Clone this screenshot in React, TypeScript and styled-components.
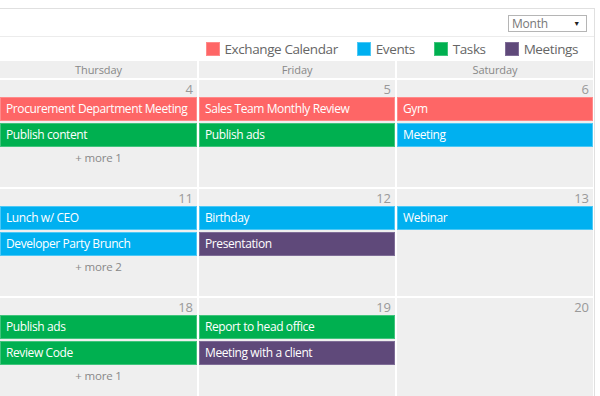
import React from "react";
import styled, { createGlobalStyle } from "styled-components";

const GlobalStyle = createGlobalStyle`
  html, body {
    margin: 0;
    padding: 0;
    background: #fff;
    overflow: hidden;
  }
  body {
    font-family: "Open Sans", "Liberation Sans", sans-serif;
  }
`;

const COLORS: Record<string, { bg: string; border: string }> = {
  exchange: { bg: "#fe6666", border: "#ff8a8a" },
  events: { bg: "#00b0f0", border: "#4cc8f5" },
  tasks: { bg: "#00b050", border: "#40c47c" },
  meetings: { bg: "#5f497a", border: "#7f6d97" },
};

type Kind = keyof typeof COLORS;

type Ev = { title: string; kind: Kind };
type Day = { num: number; events: Ev[]; more?: number };

const weeks: Day[][] = [
  [
    {
      num: 4,
      events: [
        { title: "Procurement Department Meeting", kind: "exchange" },
        { title: "Publish content", kind: "tasks" },
      ],
      more: 1,
    },
    {
      num: 5,
      events: [
        { title: "Sales Team Monthly Review", kind: "exchange" },
        { title: "Publish ads", kind: "tasks" },
      ],
    },
    {
      num: 6,
      events: [
        { title: "Gym", kind: "exchange" },
        { title: "Meeting", kind: "events" },
      ],
    },
  ],
  [
    {
      num: 11,
      events: [
        { title: "Lunch w/ CEO", kind: "events" },
        { title: "Developer Party Brunch", kind: "events" },
      ],
      more: 2,
    },
    {
      num: 12,
      events: [
        { title: "Birthday", kind: "events" },
        { title: "Presentation", kind: "meetings" },
      ],
    },
    {
      num: 13,
      events: [{ title: "Webinar", kind: "events" }],
    },
  ],
  [
    {
      num: 18,
      events: [
        { title: "Publish ads", kind: "tasks" },
        { title: "Review Code", kind: "tasks" },
      ],
      more: 1,
    },
    {
      num: 19,
      events: [
        { title: "Report to head office", kind: "tasks" },
        { title: "Meeting with a client", kind: "meetings" },
      ],
    },
    { num: 20, events: [] },
  ],
];

const legend: { label: string; kind: Kind }[] = [
  { label: "Exchange Calendar", kind: "exchange" },
  { label: "Events", kind: "events" },
  { label: "Tasks", kind: "tasks" },
  { label: "Meetings", kind: "meetings" },
];

const days = ["Thursday", "Friday", "Saturday"];

export default function App() {
  return (
    <Page>
      <GlobalStyle />
      <Panel>
        <Toolbar>
          <ViewSelect>
            <span>Month</span>
            <Arrow>▼</Arrow>
          </ViewSelect>
        </Toolbar>
        <Legend>
          {legend.map((l) => (
            <LegendItem key={l.label}>
              <Swatch $kind={l.kind} />
              {l.label}
            </LegendItem>
          ))}
        </Legend>
        <Grid>
          {days.map((d) => (
            <DayHead key={d}>{d}</DayHead>
          ))}
          {weeks.map((week) =>
            week.map((day) => (
              <Cell key={day.num}>
                <DayNum>{day.num}</DayNum>
                <Events>
                  {day.events.map((e, i) => (
                    <EventBar key={i} $kind={e.kind}>
                      {e.title}
                    </EventBar>
                  ))}
                </Events>
                {day.more ? <More>+ more {day.more}</More> : null}
              </Cell>
            ))
          )}
        </Grid>
      </Panel>
    </Page>
  );
}

const Page = styled.div`
  width: 600px;
  height: 396px;
  overflow: hidden;
  padding-top: 8px;
  box-sizing: border-box;
`;

const Panel = styled.div`
  width: 595px;
  border-top: 1px solid #e0e0e0;
  border-right: 1px solid #e0e0e0;
  box-sizing: border-box;
`;

const Toolbar = styled.div`
  height: 28px;
  display: flex;
  align-items: center;
  justify-content: flex-end;
  padding-right: 7px;
  border-bottom: 1px solid #ececec;
  box-sizing: border-box;
`;

const ViewSelect = styled.div`
  width: 79px;
  height: 17px;
  border: 1px solid #b5b5b5;
  box-sizing: border-box;
  display: flex;
  align-items: center;
  justify-content: space-between;
  padding: 0 6px 0 3px;
  font-size: 12px;
  letter-spacing: -0.2px;
  color: #777;
  margin-top: 2px;
`;

const Arrow = styled.span`
  font-size: 7px;
  color: #222;
`;

const Legend = styled.div`
  height: 24px;
  display: flex;
  align-items: center;
  justify-content: flex-end;
  gap: 19px;
  padding-right: 16px;
`;

const LegendItem = styled.div`
  display: flex;
  align-items: center;
  gap: 5px;
  font-size: 13.5px;
  letter-spacing: -0.4px;
  color: #666;
`;

const Swatch = styled.span<{ $kind: Kind }>`
  width: 14px;
  height: 14px;
  box-sizing: border-box;
  background: ${(p) => COLORS[p.$kind].bg};
  border: 1px solid ${(p) => COLORS[p.$kind].border};
`;

const Grid = styled.div`
  display: grid;
  grid-template-columns: 197px 196px 196px;
  grid-template-rows: 17px repeat(3, 107px);
  gap: 2px;
`;

const DayHead = styled.div`
  background: #efefef;
  color: #888;
  font-size: 11px;
  letter-spacing: -0.1px;
  line-height: 17px;
  text-align: center;
`;

const Cell = styled.div`
  background: #efefef;
  display: flex;
  flex-direction: column;
`;

const DayNum = styled.div`
  height: 17px;
  line-height: 18px;
  text-align: right;
  padding-right: 4px;
  font-size: 13px;
  color: #999;
`;

const Events = styled.div`
  display: flex;
  flex-direction: column;
  gap: 2px;
`;

const EventBar = styled.div<{ $kind: Kind }>`
  height: 24px;
  box-sizing: border-box;
  background: ${(p) => COLORS[p.$kind].bg};
  border: 1px solid ${(p) => COLORS[p.$kind].border};
  color: #fff;
  font-size: 12px;
  letter-spacing: -0.4px;
  line-height: 22px;
  padding-left: 5px;
  white-space: nowrap;
  overflow: hidden;
`;

const More = styled.div`
  margin-top: 3px;
  text-align: center;
  font-size: 11.5px;
  letter-spacing: -0.2px;
  color: #888;
`;
